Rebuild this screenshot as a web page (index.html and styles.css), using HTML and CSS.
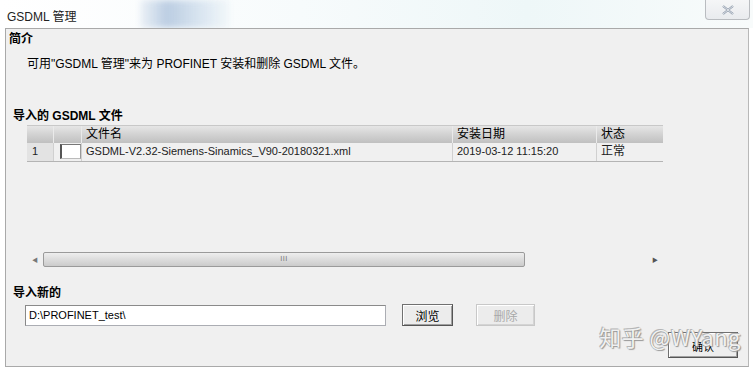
FILE: index.html
```html
<!DOCTYPE html>
<html>
<head>
<meta charset="utf-8">
<link rel="stylesheet" href="styles.css">
</head>
<body>
<div class="window">
  <div class="titlebar">
    <span class="title">GSDML 管理</span>
    <div class="blur"></div>
    <div class="close"><svg width="14" height="10" viewBox="0 0 14 10"><path d="M2 1 L12 9 M12 1 L2 9" stroke="#8a96a8" stroke-width="2.2" fill="none"/><path d="M2 1 L12 9 M12 1 L2 9" stroke="#f4f6f8" stroke-width="0.8" fill="none"/></svg></div>
  </div>
  <div class="panel">
    <div class="heading h-intro">简介</div>
    <div class="desc">可用"GSDML 管理"来为 PROFINET 安装和删除 GSDML 文件。</div>
    <div class="heading h-imported">导入的 GSDML 文件</div>
    <div class="table">
      <div class="thead">
        <div class="c c-num"></div>
        <div class="c c-chk"></div>
        <div class="c c-name">文件名</div>
        <div class="c c-date">安装日期</div>
        <div class="c c-status">状态</div>
      </div>
      <div class="trow">
        <div class="c c-num">1</div>
        <div class="c c-chk"><span class="box"></span></div>
        <div class="c c-name">GSDML-V2.32-Siemens-Sinamics_V90-20180321.xml</div>
        <div class="c c-date">2019-03-12 11:15:20</div>
        <div class="c c-status">正常</div>
      </div>
    </div>
    <div class="scrollbar">
      <span class="arrow">&#9664;</span>
      <div class="thumb"><span class="grip">III</span></div>
      <span class="arrow right">&#9654;</span>
    </div>
    <div class="heading h-new">导入新的</div>
    <div class="import-row">
      <div class="input">D:\PROFINET_test\</div>
      <div class="btn browse">浏览</div>
      <div class="btn disabled">删除</div>
    </div>
    <div class="footer">
      <div class="btn ok">确认</div>
      <div class="watermark">知乎 @WYang</div>
    </div>
  </div>
</div>
</body>
</html>
```
FILE: styles.css
```css
* { box-sizing: border-box; }
html, body { margin: 0; padding: 0; background: #ffffff; }
body {
  width: 753px; height: 370px; overflow: hidden;
  font-family: "Liberation Sans", "Noto Sans CJK SC", sans-serif;
  font-size: 12px; color: #000;
}
.window { position: relative; width: 753px; height: 370px; }
.titlebar {
  position: relative;
  height: 28px;
  display: flex; align-items: center;
  background: linear-gradient(90deg, #ffffff 0%, #f7fbfc 40%, #eef7f8 70%, #f8fbfb 100%);
}
.title { padding-left: 7px; padding-top: 3px; font-size: 12px; color: #222; position: relative; z-index: 1; }
.blur {
  position: absolute; left: 140px; top: 0; width: 90px; height: 28px;
  background: linear-gradient(90deg, rgba(180,200,225,0.2), rgba(160,185,215,0.7) 30%, rgba(190,210,230,0.5) 70%, rgba(220,235,240,0.2));
  filter: blur(3px);
}
.close {
  margin-left: auto; margin-right: 3px; align-self: flex-start; margin-top: -2px;
  width: 45px; height: 22px;
  border: 1px solid #b9bcc0; border-top: none; border-radius: 0 0 4px 4px;
  background: linear-gradient(#f6f7f8, #e9ebee);
  display: flex; align-items: center; justify-content: center;
  padding-top: 3px;
}
.panel {
  position: relative;
  margin: 0 4px 0 5px;
  height: 339px;
  border: 1px solid #a9a9a9;
  border-right-color: #b8b8b8;
  background: #f0f0f0;
  padding: 3px 0 0 0;
}
.heading { font-weight: bold; font-size: 12px; line-height: 14px; }
.h-intro { padding-left: 3px; }
.desc { padding-left: 21px; margin-top: 11px; line-height: 14px; }
.h-imported { padding-left: 7px; margin-top: 38px; }
.table {
  margin: 2px 0 0 21px; width: 636px;
  border-bottom: 1px solid #b4b4b4;
}
.thead, .trow { display: flex; }
.thead {
  height: 18px;
  background: linear-gradient(#e6e6e6, #d2d2d2 50%, #c0c0c0);
  border-top: 1px solid #c8c8c8;
}
.thead .c { border-right: 1px solid #eaeaea; line-height: 17px; }
.trow { height: 18px; background: #f0f0f0; }
.trow .c { border-right: 1px solid #d0d0d0; line-height: 17px; font-size: 11px; color: #222; }
.c { padding-left: 4px; white-space: nowrap; overflow: hidden; }
.c-num { width: 27px; padding-left: 5px; }
.trow .c-num { background: #e3e3e3; }
.c-chk { width: 28px; padding-left: 6px; }
.c-name { width: 371px; }
.c-date { width: 144px; }
.c-status { width: 66px; border-right: none !important; }
.trow .c-status, .thead .c-status, .thead .c-name, .thead .c-date { font-size: 12px; }
.box {
  display: inline-block; width: 21px; height: 15px; margin-top: 1px;
  background: #fff;
  border-left: 2px solid #555; border-top: 1px solid #777;
  border-right: 1px solid #999; border-bottom: 1px solid #bbb;
  vertical-align: top;
}
.scrollbar {
  margin: 89px 0 0 21px; width: 636px; height: 16px;
  display: flex; align-items: center;
  background: #f0f0f0;
}
.arrow { font-size: 6px; color: #777; width: 16px; text-align: center; }
.arrow.right { margin-left: auto; color: #555; }
.thumb {
  margin-left: 0; width: 482px; height: 15px;
  border: 1px solid #9a9a9a; border-radius: 2px;
  background: linear-gradient(#eeeeee, #dcdcdc 50%, #cbcbcb);
  display: flex; align-items: center; justify-content: center;
}
.grip { font-family: "DejaVu Sans", sans-serif; font-size: 7px; color: #777; letter-spacing: 0.5px; }
.h-new { padding-left: 7px; margin-top: 19px; }
.import-row { display: flex; align-items: center; margin: 4px 0 0 19px; }
.input {
  width: 361px; height: 21px;
  background: #fff;
  border: 1px solid #abadb3; border-left-color: #888; border-top-color: #8a8a8a;
  padding: 2px 0 0 3px; font-size: 11px; line-height: 15px;
}
.btn {
  height: 22px; display: flex; align-items: center; justify-content: center;
  border: 1px solid #707070;
  border-right-color: #555; border-bottom-color: #555;
  box-shadow: inset 1px 1px 0 #fff, inset -1px -1px 0 #a0a0a0;
  background: #ececec; font-size: 12px;
}
.browse { width: 51px; margin-left: 16px; }
.disabled { width: 59px; margin-left: 23px; color: #a8a8a8; border-color: #c8c8c8; box-shadow: inset 1px 1px 0 #fff, inset -1px -1px 0 #d4d4d4; }
.footer { position: relative; display: flex; justify-content: flex-end; margin-top: 6px; }
.ok { width: 70px; height: 26px; margin-right: 10px; font-size: 11px; align-items: flex-end; padding-bottom: 3px; background: #eeeeee; }
.watermark {
  position: absolute; right: 7px; top: -12px;
  font-family: "Noto Sans CJK SC", "Liberation Sans", sans-serif;
  font-size: 22px; color: rgba(255,255,255,0.9);
  text-shadow: 0 0 1px #888, 1px 1px 1px #999, -1px -1px 0 #bbb;
  letter-spacing: 0.5px;
}
```
